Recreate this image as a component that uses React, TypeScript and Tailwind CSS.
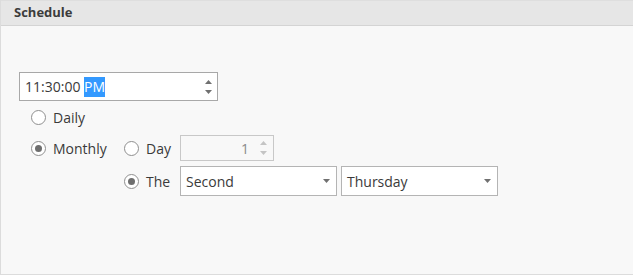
import { useState } from "react";

const Radio = ({ checked, label }: { checked: boolean; label: string }) => (
  <label className="flex items-center gap-[7px] cursor-default shrink-0">
    <span className="shrink-0 w-[15px] h-[15px] rounded-full border border-[#8f8f8f] bg-white flex items-center justify-center">
      {checked && <span className="w-[7px] h-[7px] rounded-full bg-[#6e6e6e]" />}
    </span>
    <span className="text-[14px] text-[#3a3a3a]">{label}</span>
  </label>
);

const SpinArrows = ({ dim }: { dim?: boolean }) => (
  <div className="flex flex-col gap-[6px] items-center">
    <svg width="7" height="4" viewBox="0 0 7 4">
      <path d="M0 4 L3.5 0 L7 4 Z" fill={dim ? "#c4c4c4" : "#707070"} />
    </svg>
    <svg width="7" height="4" viewBox="0 0 7 4">
      <path d="M0 0 L3.5 4 L7 0 Z" fill={dim ? "#c4c4c4" : "#707070"} />
    </svg>
  </div>
);

const Combo = ({ value }: { value: string }) => (
  <div className="w-[157px] h-[30px] border border-[#b4b4b4] bg-white flex items-center justify-between pl-[5px] pr-[6px]">
    <span className="text-[14px] text-[#3a3a3a]">{value}</span>
    <svg width="7" height="4" viewBox="0 0 7 4">
      <path d="M0 0 L3.5 4 L7 0 Z" fill="#707070" />
    </svg>
  </div>
);

export default function App() {
  const [mode] = useState("monthly");

  return (
    <div
      className="w-[633px] h-[275px] flex flex-col bg-[#f8f8f8] border-l border-b border-[#dcdcdc]"
      style={{ fontFamily: '"Open Sans", "Noto Sans", sans-serif' }}
    >
      <div className="h-[26px] shrink-0 bg-[#e6e6e6] border-t border-[#dedede] border-b border-b-[#d4d4d4] flex items-center pl-[13px]">
        <h1 className="text-[13px] font-bold text-[#3c3c3c]">Schedule</h1>
      </div>
      <div className="flex flex-col pl-[18px] pt-[46px]">
        <div className="w-[199px] h-[29px] border border-[#a8a8a8] bg-white flex items-center justify-between pl-[5px] pr-[5px]">
          <span className="text-[14px] text-[#3a3a3a] flex items-center">
            11:30:00&nbsp;
            <span className="bg-[#3399ff] text-white leading-[20px]">PM</span>
          </span>
          <SpinArrows />
        </div>
        <div className="flex flex-col pl-[12px]">
          <div className="h-[20px] mt-[6px] flex items-center">
            <Radio checked={mode === "daily"} label="Daily" />
          </div>
          <div className="flex items-start mt-[8px]">
            <div className="w-[93px] h-[26px] flex items-center">
              <Radio checked={mode === "monthly"} label="Monthly" />
            </div>
            <div className="flex flex-col gap-[5px]">
              <div className="flex items-center">
                <div className="w-[56px]">
                  <Radio checked={false} label="Day" />
                </div>
                <div className="w-[94px] h-[26px] border border-[#c8c8c8] bg-[#f8f8f8] flex items-center justify-end gap-[11px] pr-[6px]">
                  <span className="text-[14px] text-[#8a8a8a]">1</span>
                  <SpinArrows dim />
                </div>
              </div>
              <div className="flex items-center">
                <div className="w-[56px]">
                  <Radio checked label="The" />
                </div>
                <div className="flex gap-[4px]">
                  <Combo value="Second" />
                  <Combo value="Thursday" />
                </div>
              </div>
            </div>
          </div>
        </div>
      </div>
    </div>
  );
}
